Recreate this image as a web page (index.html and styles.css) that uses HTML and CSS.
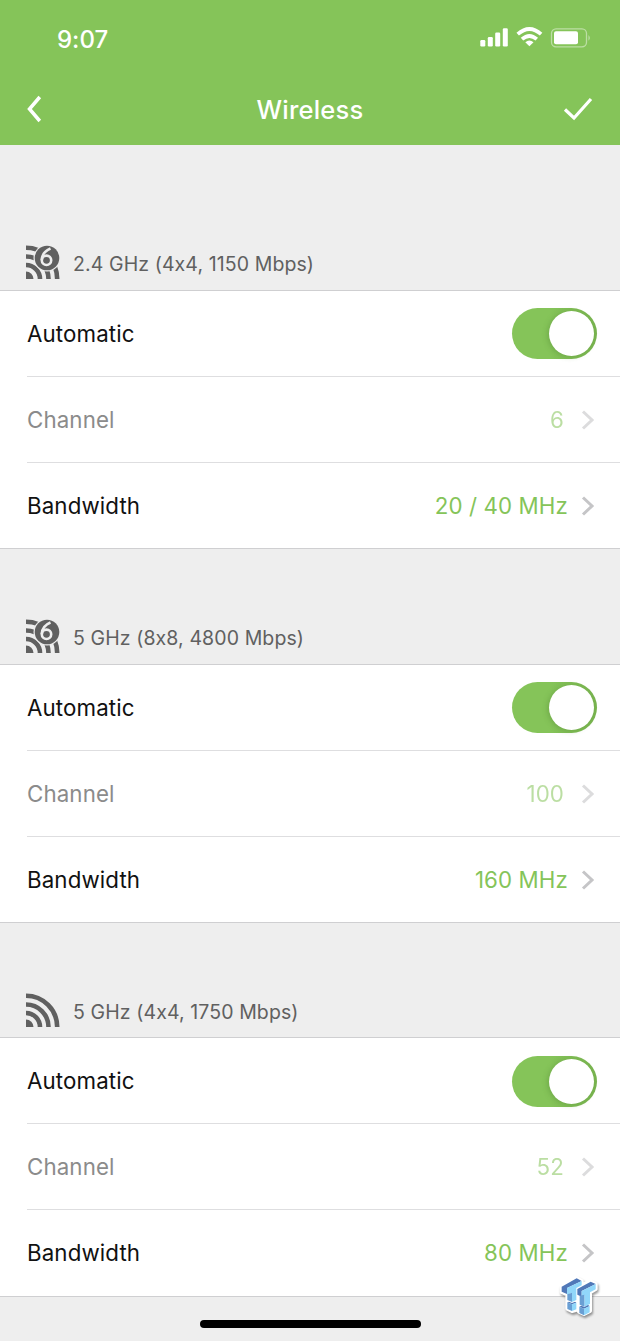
FILE: index.html
```html
<!DOCTYPE html>
<html lang="en">
<head>
<meta charset="utf-8">
<title>Wireless</title>
<link rel="stylesheet" href="styles.css">
</head>
<body>
<svg class="defs" width="0" height="0" aria-hidden="true">
  <defs>
    <g id="arcs" fill="none" stroke="#606060" stroke-width="4.6">
      <path d="M0 26.5A7.5 7.5 0 0 1 7.5 34H0z" fill="#606060" stroke="none"/>
      <path d="M0 20A14 14 0 0 1 14 34M0 11.500A22.500 22.500 0 0 1 22.500 34M0 2.800A31.200 31.200 0 0 1 31.200 34"/>
    </g>
    <mask id="cut"><path fill="#fff" d="M0 0h36v36H0z"/><circle cx="21" cy="13" r="13.500" fill="#000"/></mask>
    <symbol id="wifi" viewBox="0 0 36 36"><use href="#arcs"/></symbol>
    <symbol id="wifi6" viewBox="0 0 36 36">
      <g mask="url(#cut)"><use href="#arcs"/></g>
      <circle cx="21" cy="13" r="12.300" fill="#606060"/>
      <g fill="none" stroke="#eee" stroke-width="2.6"><path d="M24.500 3.500Q16 7 15.800 15"/><circle cx="20.500" cy="15.300" r="4.700"/></g>
    </symbol>
    <symbol id="next" viewBox="0 0 14 22"><path d="M2 2.500l9 8.500-9 8.500" fill="none" stroke="#c5c5c7" stroke-width="3"/></symbol>
  </defs>
</svg>
<header class="header">
  <div class="status">
    <span class="time">9:07</span>
    <svg width="112" height="22" viewBox="0 0 112 22" fill="#fff">
      <rect x=".3" y="13" width="5" height="6.500" rx="1.200"/><rect x="7.800" y="10" width="5" height="9.500" rx="1.200"/><rect x="15.200" y="5.500" width="5" height="14" rx="1.200"/><rect x="22.800" y="1.300" width="5" height="18.200" rx="1.200"/>
      <g fill="none" stroke="#fff" stroke-width="3.700"><path d="M37.700 7.200Q49.400-3.300 61.100 7.200M42 12.200Q49.400 5.700 56.800 12.200"/></g><path d="M45.300 15.200Q49.400 12 53.500 15.200L49.400 19.300z"/>
      <rect x="71.500" y="1.800" width="35" height="18" rx="4.500" fill="none" stroke="#fff" stroke-opacity=".45" stroke-width="1.300"/><rect x="74" y="4.200" width="24" height="13" rx="2"/><path d="M108.500 8q2.600 2.900 0 5.800z" opacity=".5"/>
    </svg>
  </div>
  <nav class="nav">
    <svg width="30" height="30" viewBox="0 0 30 30"><path d="M14.800 3L4.500 15l10.300 12" fill="none" stroke="#fff" stroke-width="3.500"/></svg>
    <h1>Wireless</h1>
    <svg width="30" height="24" viewBox="0 0 30 24"><path d="M2 12.500l9 8.500L28 2" fill="none" stroke="#fff" stroke-width="3.200"/></svg>
  </nav>
</header>
<main>
  <section>
    <h2 class="first"><svg class="band"><use href="#wifi6"/></svg><span>2.4 GHz (4x4, 1150 Mbps)</span></h2>
    <div class="group">
      <div class="row"><span>Automatic</span><i class="toggle"></i></div>
      <div class="row off"><span>Channel</span><b>6</b><svg class="next"><use href="#next"/></svg></div>
      <div class="row"><span>Bandwidth</span><b>20 / 40 MHz</b><svg class="next"><use href="#next"/></svg></div>
    </div>
  </section>
  <section>
    <h2><svg class="band"><use href="#wifi6"/></svg><span>5 GHz (8x8, 4800 Mbps)</span></h2>
    <div class="group">
      <div class="row"><span>Automatic</span><i class="toggle"></i></div>
      <div class="row off"><span>Channel</span><b>100</b><svg class="next"><use href="#next"/></svg></div>
      <div class="row"><span>Bandwidth</span><b>160 MHz</b><svg class="next"><use href="#next"/></svg></div>
    </div>
  </section>
  <section>
    <h2 class="third"><svg class="band"><use href="#wifi"/></svg><span>5 GHz (4x4, 1750 Mbps)</span></h2>
    <div class="group last">
      <div class="row"><span>Automatic</span><i class="toggle"></i></div>
      <div class="row off"><span>Channel</span><b>52</b><svg class="next"><use href="#next"/></svg></div>
      <div class="row"><span>Bandwidth</span><b>80 MHz</b><svg class="next"><use href="#next"/></svg></div>
    </div>
  </section>
</main>
<div class="home"></div>
<svg class="badge" width="46" height="48" viewBox="51 30 138 144">
  <path class="outline" d="M65 65l45-25 15 8 1 12 26-10 15 7v15l-17 10v56l-18 9-15-7v-8l-21 6-14-7V88l-17-7z"/>
  <path fill="#5078b8" d="M65 65l45-25 15 8-44 21v18l-16-7z"/>
  <path fill="#91d7fa" d="M81 69l44-21v13l-16 8v36l-13 6V83l-15 6z"/>
  <path fill="#699fd4" d="M82 88l14-5v28l-14-6z"/>
  <path fill="#5078b8" d="M112 72l40-22 15 7-42 21v17l-13-6z"/>
  <path fill="#91d7fa" d="M125 78l42-21v16l-17 9v35l-17 8V91l-8 4z"/>
  <path fill="#699fd4" d="M119 92l14-3v36l-14-6z"/>
  <path fill="#5078b8" d="M82 112l14 6 13-5-4-3-9 4-9-4zM118 125l14 6 17-8-5-3-11 6-9-4z"/>
  <path fill="#699fd4" d="M82 112l14 6v20l-14-6zM118 125l14 6v20l-14-7z"/>
  <path fill="#91d7fa" d="M96 118l13-5v20l-13 5zM132 131l17-8v19l-17 9z"/>
</svg>
</body>
</html>
```
FILE: styles.css
```css
* { box-sizing: border-box; }
body { margin: 0; height: 1341px; overflow: hidden; position: relative; background: #eee; font-family: Inter, "Liberation Sans", sans-serif; font-feature-settings: "calt" 0; }
svg { display: block; flex: none; }
.defs { position: absolute; }
.header { height: 145px; background: #85c459; color: #fff; }
.status { height: 73px; padding: 9px 28px 0 57px; display: flex; align-items: center; justify-content: space-between; }
.status svg { margin-top: -7px; }
.time { font-size: 24px; font-weight: 500; line-height: 28px; margin-top: -3px; }
.nav { height: 72px; padding: 0 27px 0 25px; display: flex; align-items: center; justify-content: space-between; }
h1 { margin: 2px 0 0 2px; font-size: 25.5px; font-weight: 500; line-height: 30px; letter-spacing: .2px; }
h2 { margin: 0; height: 115px; padding: 0 26px 9px; display: flex; align-items: flex-end; gap: 11px; color: #606060; font-size: 19.5px; font-weight: 400; line-height: 34px; letter-spacing: .1px; }
h2.first { height: 145px; }
h2.third { height: 114px; padding-bottom: 8px; }
.band { width: 36px; height: 36px; }
.group { background: #fff; border: solid #cfcfd1; border-width: 1px 0; height: 259px; display: grid; grid-template-rows: repeat(3, 86px); }
.last { height: 260px; }
.row { margin-left: 27px; padding-right: 25px; border-bottom: 1px solid #dedee0; display: flex; align-items: center; font-size: 22.3px; line-height: 30px; letter-spacing: .12px; color: #111; }
.row:last-child { border-bottom: 0; }
.row span { flex: 1; }
.row b { color: #85c459; font-weight: 400; margin-right: 13px; }
.off span { color: #8b8b8b; }
.off b { opacity: .55; margin-right: 17px; }
.off .next { opacity: .6; }
.next { width: 14px; height: 22px; }
.toggle { width: 85px; height: 51px; margin-right: -2px; border-radius: 26px; padding: 3px; background: linear-gradient(90deg, #85c459 45%, #78b34f); display: flex; justify-content: flex-end; }
.last .toggle { margin-top: 1px; }
.toggle::after { content: ""; width: 45px; height: 45px; border-radius: 50%; background: #fff; box-shadow: -2px 1px 5px #568b3560; }
.home { position: absolute; left: 200px; top: 1320px; width: 221px; height: 8px; border-radius: 4px; background: #000; }
.badge { position: absolute; left: 557px; top: 1275px; overflow: visible; filter: drop-shadow(1px 2px 1px #0006); }
.outline { fill: #fff; stroke: #fff; stroke-width: 12; stroke-linejoin: round; }
```
